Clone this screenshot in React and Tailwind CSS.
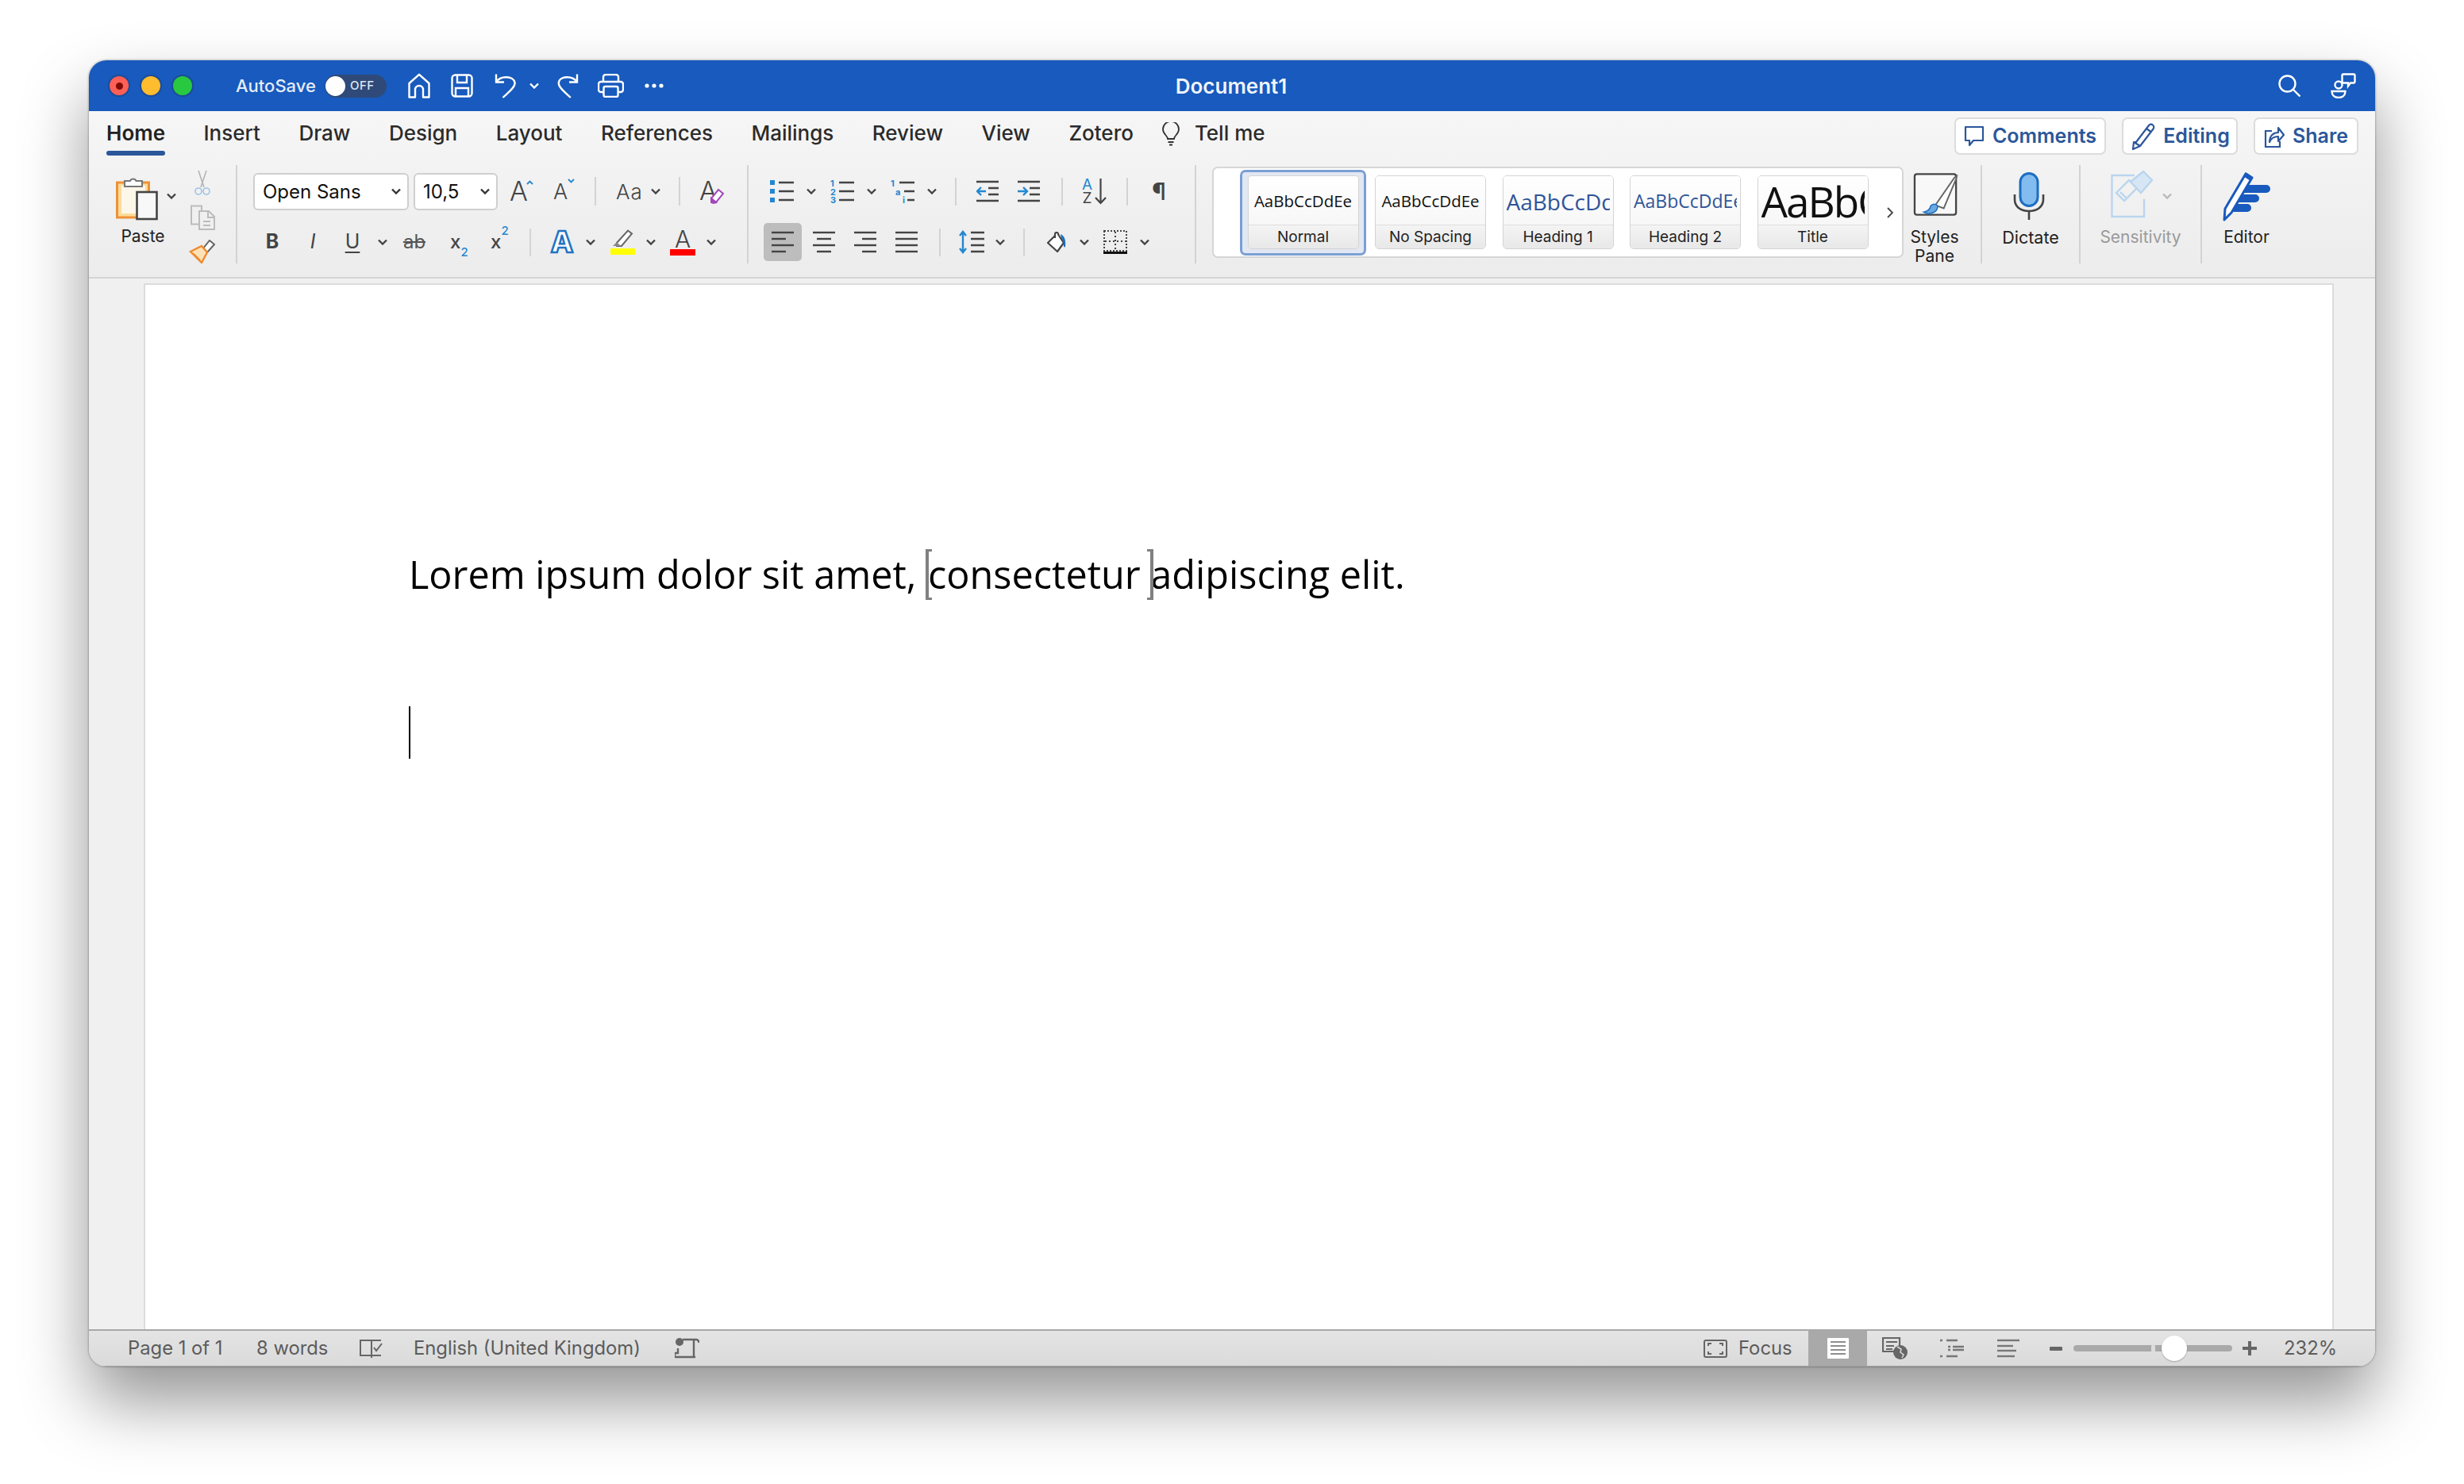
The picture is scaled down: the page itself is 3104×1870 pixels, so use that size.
import React from "react";

const Chev = ({ c = "#444", cls = "" }) => (
  <svg className={`shrink-0 ${cls}`} width="12" height="8" viewBox="0 0 12 8"><path d="M1 1.5l5 5 5-5" fill="none" stroke={c} strokeWidth="2.4" /></svg>
);
const Sep = ({ cls = "" }) => <div className={`w-[2px] shrink-0 bg-[#d3d3d3] ${cls}`} />;
const Lines = ({ w = 28, h = 24, items, c = "#444", sw = 2.4, cls = "" }) => (
  <svg className={`shrink-0 ${cls}`} width={w} height={h} viewBox={`0 0 ${w} ${h}`}>
    {items.map(([x1, x2, y], i) => <path key={i} d={`M${x1} ${y}H${x2}`} stroke={c} strokeWidth={sw} />)}
  </svg>
);
const BLUE = "#2487cf";

const Tab = ({ children, active }) => (
  <div className="flex flex-col">
    <span className={`leading-[32px] text-[26px] whitespace-nowrap ${active ? "font-semibold text-[#222]" : "font-medium text-[#2b2b2b]"}`}>{children}</span>
    <span className={`mt-[6px] h-[6px] rounded-[3px] ${active ? "bg-[#2b579a]" : "bg-transparent"}`} />
  </div>
);

const TopBtn = ({ children, icon, cls = "" }) => (
  <div className={`h-[47px] rounded-[7px] border-2 border-[#dcdcdc] bg-white flex items-center justify-center gap-[10px] text-[25px] font-semibold text-[#2b579a] pt-[1px] ${cls}`}>
    {icon}
    <span>{children}</span>
  </div>
);

const Thumb = ({ sample, label, cls = "" }) => (
  <div className={`w-[140px] h-[93px] rounded-[5px] border border-[#d4d4d4] overflow-hidden flex flex-col shrink-0 ${cls}`}>
    <div className="h-[61px] pt-[2px] bg-gradient-to-b from-white to-[#f7f7f7] flex items-center px-[4px] overflow-hidden justify-center whitespace-nowrap">
      {sample}
    </div>
    <div className="flex-1 border-t border-[#dedede] bg-gradient-to-b from-[#f4f4f4] to-[#e8e8e8] flex items-center justify-center text-[19px] text-[#222] leading-none">{label}</div>
  </div>
);

const OS = "font-['Open_Sans',sans-serif]";

export default function App() {
  return (
    <div className="w-[3104px] h-[1870px] bg-white overflow-hidden pt-[76px] pl-[112px] font-[Inter,sans-serif]">
      <div className="w-[2880px] h-[1646px] rounded-[22px] overflow-hidden flex flex-col bg-[#f1f1f1] shadow-[0_44px_84px_rgba(0,0,0,0.42),0_0_3px_rgba(0,0,0,0.45)]">
        {/* Title bar */}
        <div className="h-[64px] shrink-0 bg-[#185abd] grid grid-cols-[1fr_auto_1fr] items-center text-white">
          <div className="flex items-center">
            <div className="ml-[26px] w-[24px] h-[24px] rounded-full bg-[#ff5f57] ring-2 ring-[#1c4c98] flex items-center justify-center"><div className="w-[9px] h-[9px] rounded-full bg-[#7f0a05]" /></div>
            <div className="ml-[16px] w-[24px] h-[24px] rounded-full bg-[#febc2e] ring-2 ring-[#1c4c98]" />
            <div className="ml-[16px] w-[24px] h-[24px] rounded-full bg-[#28c840] ring-2 ring-[#1c4c98]" />
            <span className="ml-[55px] w-[100px] text-[22px] font-medium text-[#e4ecf8] whitespace-nowrap">AutoSave</span>
            <div className="ml-[12px] w-[78px] h-[29px] rounded-full bg-[#2f4a78] flex items-center pl-[1px]">
              <div className="w-[25px] h-[25px] rounded-full bg-white shrink-0" />
              <span className="ml-[6px] text-[15px] font-medium tracking-[0.5px] text-[#dfe6f2]">OFF</span>
            </div>
            <svg className="ml-[26px] shrink-0" width="30" height="32" viewBox="0 0 30 32" fill="none" stroke="#fff" strokeWidth="2.4"><path d="M2.5 30.5V13L15 1.8 27.5 13v17.5H20V21a5 5 0 0 0-10 0v9.5z" strokeLinejoin="round" /></svg>
            <svg className="ml-[25px] shrink-0" width="28" height="30" viewBox="0 0 28 30" fill="none" stroke="#fff" strokeWidth="2.4"><rect x="1.5" y="1.5" width="25" height="27" rx="4" /><path d="M8 2v9h12V2M6 28V18h16v10" /></svg>
            <svg className="ml-[27px] shrink-0" width="28" height="32" viewBox="0 0 28 32" fill="none" stroke="#fff" strokeWidth="2.4"><path d="M2 1.5v10h10M2 11.5C7 3 24 3 25.5 12c1 6-9 13-15 19" /></svg>
            <Chev c="#fff" cls="ml-[16px]" />
            <svg className="ml-[23px] shrink-0" width="27" height="32" viewBox="0 0 27 32" fill="none" stroke="#fff" strokeWidth="2.4"><path d="M25 1.5v10H15M25 11.5C20 3 3 3 1.8 12c-1 6 9 13 15 19" /></svg>
            <svg className="ml-[24px] shrink-0" width="33" height="30" viewBox="0 0 33 30" fill="none" stroke="#fff" strokeWidth="2.4"><path d="M7 10V4a3 3 0 0 1 3-3h13a3 3 0 0 1 3 3v6" /><path d="M7 23H4a3 3 0 0 1-3-3v-7a3 3 0 0 1 3-3h25a3 3 0 0 1 3 3v7a3 3 0 0 1-3 3h-3" /><rect x="7.5" y="16" width="18" height="13" rx="2" /></svg>
            <svg className="ml-[26px] shrink-0" width="24" height="6" viewBox="0 0 24 6" fill="#fff"><circle cx="3" cy="3" r="2.6" /><circle cx="12" cy="3" r="2.6" /><circle cx="21" cy="3" r="2.6" /></svg>
          </div>
          <div className="text-[26px] font-semibold text-white/95 -ml-[2px]">Document1</div>
          <div className="flex items-center justify-end pr-[24px] gap-[38px]">
            <svg width="28" height="28" viewBox="0 0 28 28" fill="none" stroke="#fff" strokeWidth="2.4"><circle cx="11.5" cy="11.5" r="10" /><path d="M18.5 18.5l9 9" /></svg>
            <svg width="32" height="32" viewBox="0 0 32 32" fill="none" stroke="#fff" strokeWidth="2.4"><circle cx="10" cy="15" r="4.5" /><path d="M1.5 23h17c0 5-3.5 8-8.5 8s-8.5-3-8.5-8z" /><path d="M16 1.5h13a1.5 1.5 0 0 1 1.5 1.5v8A1.5 1.5 0 0 1 29 12.5h-4l-3 4v-4h-6A1.5 1.5 0 0 1 14.5 11V3A1.5 1.5 0 0 1 16 1.5z" /></svg>
          </div>
        </div>

        {/* Ribbon */}
        <div className="h-[211px] shrink-0 border-b-2 border-[#d4d4d4] bg-gradient-to-b from-[#f6f6f6] to-[#ececec] flex flex-col">
          {/* Tab row */}
          <div className="h-[68px] shrink-0 flex items-start pl-[22px] pr-[21px] pt-[8px]">
            <div className="flex items-start gap-[48.5px] mt-[4px]">
              <Tab active>Home</Tab>
              <Tab>Insert</Tab>
              <Tab>Draw</Tab>
              <Tab>Design</Tab>
              <Tab>Layout</Tab>
              <Tab>References</Tab>
              <Tab>Mailings</Tab>
              <Tab>Review</Tab>
              <Tab>View</Tab>
              <Tab>Zotero</Tab>
              <div className="flex items-start -ml-[13.5px]">
                <svg className="mt-[2px] shrink-0" width="24" height="30" viewBox="0 0 24 30" fill="none" stroke="#333" strokeWidth="1.8"><path d="M8 21c0-4-6-6-6-12a10 10 0 0 1 20 0c0 6-6 8-6 12z" /><path d="M8.5 25h7M10 28.5h4" /></svg>
                <span className="ml-[18px]"><Tab>Tell me</Tab></span>
              </div>
            </div>
            <div className="ml-auto flex gap-[20px]">
              <TopBtn cls="w-[191px]" icon={<svg width="26" height="28" viewBox="0 0 26 28" fill="none" stroke="#2b579a" strokeWidth="2.2"><path d="M2 2h22v17H12l-5 6v-6H2z" strokeLinejoin="round" /></svg>}>Comments</TopBtn>
              <TopBtn cls="w-[146px]" icon={<svg width="32" height="36" viewBox="0 0 32 36" fill="none" stroke="#2b579a" strokeWidth="2.2"><path d="M8 25L24 4a3.5 3.5 0 0 1 5.5 4.5L13 30l-9 4 1-9zM5 25l8 5M21 8l6 4.5" strokeLinejoin="round" /></svg>}>Editing</TopBtn>
              <TopBtn cls="w-[132px]" icon={<svg width="26" height="30" viewBox="0 0 26 30" fill="none" stroke="#2b579a" strokeWidth="2.2"><path d="M10 8H2v20h18v-7" /><path d="M7 22c0-8 5-12 11-12V4l7 9-7 8v-6c-5 0-9 2-11 7z" strokeLinejoin="round" /></svg>}>Share</TopBtn>
            </div>
          </div>

          {/* Tool row */}
          <div className="flex items-start h-[141px]">
            {/* Clipboard */}
            <div className="w-[185px] shrink-0 flex items-start pl-[34px]">
              <div className="w-[76px] shrink-0 flex flex-col">
                <div className="flex pt-[10px] h-[78px] items-start">
                  <svg className="shrink-0" width="54" height="60" viewBox="0 0 54 60"><rect x="1.5" y="12" width="40" height="44" fill="#fbdc9b" stroke="#ee9138" strokeWidth="3" /><rect x="7" y="16" width="30" height="35" fill="#fdf7ea" /><path d="M11 17v-7h7a4 4 0 0 1 7.5 0H33v7z" fill="#fff" stroke="#777" strokeWidth="2" /><rect x="26.5" y="24" width="25" height="34" fill="#f8f8f8" stroke="#444" strokeWidth="2.6" /></svg>
                  <Chev cls="ml-[10px] mt-[25px]" />
                </div>
                <span className="w-[68px] text-center text-[21px] leading-[24px] text-[#222]">Paste</span>
              </div>
              <div className="ml-[16px] w-[33px] shrink-0 flex flex-col items-center">
                <svg className="mt-[6px] shrink-0" width="22" height="32" viewBox="0 0 22 32" fill="none" strokeWidth="1.6"><path d="M6 1l7 21M16 1L9 22" stroke="#b4b4b4" /><circle cx="6" cy="27" r="4" stroke="#9cc3e6" /><circle cx="16" cy="27" r="4" stroke="#9cc3e6" /></svg>
                <svg className="mt-[12px] shrink-0" width="32" height="32" viewBox="0 0 32 32" fill="none" stroke="#bcbcbc" strokeWidth="2"><path d="M15 7V1.5H2v23h9" /><path d="M12 8h12l7 7v16H12zM23 8v8h8M17 21h9M17 26h9" /></svg>
                <svg className="mt-[12px] shrink-0" width="33" height="30" viewBox="0 0 33 30" fill="none"><path d="M26 1l6 5-9 10-5-5z" fill="#fff" stroke="#666" strokeWidth="2" /><path d="M2 15l14-7 7 8-7 13z" fill="#fce2b6" stroke="#ee8a2e" strokeWidth="2.4" /><path d="M6 18l8 8" stroke="#ee8a2e" strokeWidth="2" /></svg>
              </div>
            </div>
            <Sep cls="h-[124px]" />

            {/* Font group */}
            <div className="w-[642px] shrink-0 flex flex-col">
              <div className="h-[66px] flex items-center">
                <div className="ml-[20px] w-[196px] h-[47px] shrink-0 rounded-[6px] border-2 border-[#cfcfcf] bg-white flex items-center pl-[10px] pr-[8px] text-[24px] text-[#111]">
                  <span className="pt-[2px]">Open Sans</span><Chev c="#333" cls="ml-auto" />
                </div>
                <div className="ml-[6px] w-[106px] h-[47px] shrink-0 rounded-[6px] border-2 border-[#cfcfcf] bg-white flex items-center pl-[10px] pr-[8px] text-[24px] text-[#111]">
                  <span className="pt-[2px]">10,5</span><Chev c="#333" cls="ml-auto" />
                </div>
                <div className="ml-[15px] w-[30px] shrink-0 relative h-[36px] text-[34px] font-light leading-[36px] text-[#444]">A<svg className="absolute top-[4px] right-0" width="9" height="6" viewBox="0 0 9 6"><path d="M1 5l3.5-3.5L8 5" fill="none" stroke={BLUE} strokeWidth="1.8" /></svg></div>
                <div className="ml-[25px] w-[27px] shrink-0 relative h-[36px] text-[27px] font-light leading-[38px] text-[#444]">A<svg className="absolute top-[2px] right-0" width="9" height="6" viewBox="0 0 9 6"><path d="M1 1l3.5 3.5L8 1" fill="none" stroke={BLUE} strokeWidth="1.8" /></svg></div>
                <Sep cls="ml-[25px] h-[36px]" />
                <span className="ml-[25px] w-[30px] shrink-0 text-[26px] font-light tracking-[1px] text-[#444] whitespace-nowrap">Aa</span>
                <Chev cls="ml-[14px]" />
                <Sep cls="ml-[23px] h-[36px]" />
                <div className="ml-[24px] w-[31px] h-[36px] shrink-0 relative text-[33px] font-light leading-[34px] text-[#444]">A<svg className="absolute left-[12px] top-[14px]" width="20" height="20" viewBox="0 0 20 20" fill="#fff" stroke="#a347ba" strokeWidth="2"><path d="M12 2l6 5-9 11-6-5z" /><path d="M3 13l6 5-3 1-3-1z" fill="#a347ba" /></svg></div>
              </div>
              <div className="h-[62px] flex items-center">
                <span className="ml-[33px] w-[22px] shrink-0 text-center text-[25px] font-bold text-[#444]">B</span>
                <span className="ml-[30px] w-[20px] shrink-0 text-center text-[25px] italic font-normal text-[#444]">I</span>
                <span className="ml-[29px] w-[22px] shrink-0 text-center text-[25px] underline underline-offset-[4px] text-[#444]">U</span>
                <Chev cls="ml-[21px]" />
                <span className="ml-[17px] w-[34px] shrink-0 text-center text-[24px] line-through text-[#555]">ab</span>
                <span className="ml-[28px] w-[26px] shrink-0 text-[24px] font-medium text-[#444] whitespace-nowrap">x<sub className="text-[15px] text-[#2487cf] align-[-6px]">2</sub></span>
                <span className="ml-[25px] w-[26px] shrink-0 text-[24px] font-medium text-[#444] whitespace-nowrap">x<sup className="text-[15px] text-[#2487cf] align-[10px]">2</sup></span>
                <Sep cls="ml-[23px] h-[35px]" />
                <span className="ml-[23px] w-[32px] shrink-0 text-center text-[37px] leading-[38px] font-extrabold text-white [-webkit-text-stroke:2.5px_#1f74c4]">A</span>
                <Chev cls="ml-[14px]" />
                <div className="ml-[19px] w-[31px] shrink-0 flex flex-col">
                  <svg width="31" height="22" viewBox="0 0 31 22" fill="none"><path d="M8 17L22 1.5l5 4L14 21H8z" fill="#fff" stroke="#666" strokeWidth="2" /><path d="M8 16l5 5H3z" fill="#888" /></svg>
                  <div className="h-[8px] mt-[2px] bg-[#ffff00]" />
                </div>
                <Chev cls="ml-[14px]" />
                <div className="ml-[18px] w-[32px] shrink-0 flex flex-col items-center">
                  <span className="text-[30px] font-light leading-[25px] text-[#444]">A</span>
                  <div className="h-[8px] w-full bg-[#ff0000]" />
                </div>
                <Chev cls="ml-[14px]" />
              </div>
            </div>
            <Sep cls="h-[124px]" />

            {/* Paragraph group */}
            <div className="w-[562px] shrink-0 flex flex-col">
              <div className="h-[66px] flex items-center">
                <svg className="ml-[27px] shrink-0" width="30" height="30" viewBox="0 0 30 30"><rect width="6" height="6" y="1" fill={BLUE} /><rect width="6" height="6" y="12" fill={BLUE} /><rect width="6" height="6" y="23" fill={BLUE} /><path d="M11 4h19M11 15h19M11 26h19" stroke="#444" strokeWidth="2.4" /></svg>
                <Chev cls="ml-[16px]" />
                <svg className="ml-[18px] shrink-0" width="30" height="30" viewBox="0 0 30 30" fontFamily="Inter" fontSize="11" fontWeight="700" fill={BLUE}><text x="0" y="9">1</text><text x="0" y="20">2</text><text x="0" y="30">3</text><path d="M11 4h19M11 15h19M11 26h19" stroke="#444" strokeWidth="2.4" /></svg>
                <Chev cls="ml-[16px]" />
                <svg className="ml-[18px] shrink-0" width="30" height="30" viewBox="0 0 30 30" fontFamily="Inter" fontSize="11" fontWeight="700" fill={BLUE}><text x="0" y="9">1</text><text x="6" y="20">a</text><text x="15" y="30">i</text><path d="M11 4h19M17 15h13M21 26h9" stroke="#444" strokeWidth="2.4" /></svg>
                <Chev cls="ml-[16px]" />
                <Sep cls="ml-[23px] h-[35px]" />
                <svg className="ml-[25px] shrink-0" width="28" height="28" viewBox="0 0 28 28"><path d="M0 2h28M15 10h13M15 18h13M0 26h28" stroke="#444" strokeWidth="2.4" /><path d="M12 14H2M6 9l-5 5 5 5" fill="none" stroke={BLUE} strokeWidth="2.4" /></svg>
                <svg className="ml-[24px] shrink-0" width="28" height="28" viewBox="0 0 28 28"><path d="M0 2h28M15 10h13M15 18h13M0 26h28" stroke="#444" strokeWidth="2.4" /><path d="M0 14h10M7 9l5 5-5 5" fill="none" stroke={BLUE} strokeWidth="2.4" /></svg>
                <Sep cls="ml-[27px] h-[35px]" />
                <div className="ml-[23px] w-[32px] h-[34px] shrink-0 flex">
                  <div className="flex flex-col items-center text-[19px] leading-[17px] font-normal w-[15px]"><span className="text-[#2487cf]">A</span><span className="text-[#444]">Z</span></div>
                  <svg className="ml-[2px]" width="15" height="34" viewBox="0 0 15 34" fill="none" stroke="#444" strokeWidth="2.2"><path d="M7.5 1v31M1 25l6.5 7 6.5-7" /></svg>
                </div>
                <Sep cls="ml-[25px] h-[35px]" />
                <span className="ml-[29px] w-[20px] shrink-0 text-center text-[30px] font-medium text-[#444] leading-none">¶</span>
              </div>
              <div className="h-[62px] flex items-center">
                <div className="ml-[19px] w-[48px] h-[48px] shrink-0 rounded-[5px] bg-[#bdbdbd] flex items-center justify-center">
                  <Lines items={[[0, 28, 2], [0, 18, 10], [0, 28, 18], [0, 18, 26]]} h={28} />
                </div>
                <Lines cls="ml-[14px]" items={[[0, 28, 2], [5, 23, 10], [0, 28, 18], [5, 23, 26]]} h={28} />
                <Lines cls="ml-[24px]" items={[[0, 28, 2], [10, 28, 10], [0, 28, 18], [10, 28, 26]]} h={28} />
                <Lines cls="ml-[24px]" items={[[0, 28, 2], [0, 28, 10], [0, 28, 18], [0, 28, 26]]} h={28} />
                <Sep cls="ml-[27px] h-[35px]" />
                <svg className="ml-[23px] shrink-0" width="32" height="30" viewBox="0 0 32 30"><path d="M15 3h17M15 11h17M15 19h17M15 27h17" stroke="#444" strokeWidth="2.4" /><path d="M5 3v24M1 7l4-5 4 5M1 23l4 5 4-5" fill="none" stroke={BLUE} strokeWidth="2.4" /></svg>
                <Chev cls="ml-[14px]" />
                <Sep cls="ml-[23px] h-[35px]" />
                <svg className="ml-[28px] shrink-0" width="25" height="26" viewBox="0 0 25 26" fill="none"><path d="M10 8V3a2 2 0 0 1 4 0l1 2 6 9-8 11L1 14l9-9" stroke="#444" strokeWidth="2.2" fill="#fff" strokeLinejoin="round" /><path d="M17 3c5 2 7 8 6 16-1 1-2 0-2-1 0-5-1-8-3-10z" fill="#1d6fc0" /></svg>
                <Chev cls="ml-[16px]" />
                <svg className="ml-[18px] shrink-0" width="30" height="30" viewBox="0 0 30 30" fill="none"><rect x="1" y="1" width="28" height="25" stroke="#444" strokeWidth="2" strokeDasharray="2 2" /><path d="M15 2v24M2 14h26" stroke="#444" strokeWidth="2" strokeDasharray="2 3" /><path d="M0 28.5h30" stroke="#111" strokeWidth="3" /></svg>
                <Chev cls="ml-[16px]" />
              </div>
            </div>
            <Sep cls="h-[124px]" />

            {/* Styles gallery */}
            <div className="ml-[20px] mt-[2px] w-[871px] h-[115px] shrink-0 rounded-[7px] border-2 border-[#d6d6d6] bg-white flex items-center pl-[33px]">
              <div className="w-[159px] h-[108px] shrink-0 rounded-[7px] border-[3px] border-[#7b9fd3] bg-[#e1e7f3] flex items-center justify-center">
                <Thumb label="Normal" sample={<span className={`${OS} text-[20.5px] font-medium text-[#111]`}>AaBbCcDdEe</span>} />
              </div>
              <Thumb cls="ml-[11px]" label="No Spacing" sample={<span className={`${OS} text-[20.5px] font-medium text-[#111]`}>AaBbCcDdEe</span>} />
              <Thumb cls="ml-[20.5px]" label="Heading 1" sample={<span className={`${OS} text-[28px] text-[#2f5597] flex justify-start w-full overflow-hidden`}>AaBbCcDdE</span>} />
              <Thumb cls="ml-[20.5px]" label="Heading 2" sample={<span className={`${OS} text-[23px] text-[#2f5597] flex justify-start w-full overflow-hidden`}>AaBbCcDdEe</span>} />
              <Thumb cls="ml-[20.5px]" label="Title" sample={<span className={`${OS} text-[53px] leading-[56px] tracking-[-2px] text-[#111] flex justify-start w-full overflow-hidden`}>AaBbCc</span>} />
              <svg className="ml-[23px] shrink-0" width="8" height="14" viewBox="0 0 8 14"><path d="M1 1l6 6-6 6" fill="none" stroke="#444" strokeWidth="1.8" /></svg>
            </div>

            {/* Styles pane */}
            <div className="w-[78px] shrink-0 flex flex-col items-center">
              <div className="h-[79px] pt-[10px] pl-[4px]">
                <svg width="60" height="56" viewBox="0 0 60 58" fill="none"><rect x="2" y="1.5" width="54" height="53" rx="3" fill="#f8f8f8" stroke="#444" strokeWidth="2.4" /><path d="M29 42L54 6l3-2-1 4-16 38z" fill="#fff" stroke="#666" strokeWidth="2" /><path d="M20 53c6 0 12-3 12-10-2-3-7-3-9 0-1 4-3 7-9 8 2 1 4 2 6 2z" fill="#6aa9e0" stroke="#1d6fc0" strokeWidth="1.6" /></svg>
              </div>
              <span className="text-[21px] leading-[24px] text-[#222] text-center">Styles<br />Pane</span>
            </div>
            <Sep cls="ml-[19px] h-[124px]" />

            {/* Dictate */}
            <div className="w-[122px] shrink-0 flex flex-col items-center">
              <div className="h-[79px] pt-[9px] pr-[4px]">
                <svg width="40" height="60" viewBox="0 0 40 60" fill="none"><rect x="9" y="1.5" width="22" height="41" rx="11" fill="#83bcee" stroke="#1b6ec2" strokeWidth="3" /><path d="M2 28v6c0 10 8 15 18 15s18-5 18-15v-6M20 49v11" stroke="#444" strokeWidth="2.6" /></svg>
              </div>
              <span className="text-[21.5px] leading-[24px] text-[#222]">Dictate</span>
            </div>
            <Sep cls="h-[124px]" />

            {/* Sensitivity */}
            <div className="w-[151px] shrink-0 flex flex-col items-center">
              <div className="h-[79px] pt-[7px] flex items-start pl-[2px]">
                <svg className="shrink-0" width="54" height="60" viewBox="0 0 54 60" fill="none" stroke="#b9d5ee" strokeWidth="2.4"><path d="M30 6H1.5v52H42V36" /><path d="M7 28l16-16 10 10-16 16zM12 27l8 8" /><path d="M25 14l16-13 11 11-14 16z" fill="#d6e6f5" /></svg>
                <Chev c="#b8b8b8" cls="ml-[11px] mt-[28px]" />
              </div>
              <span className="text-[21px] leading-[24px] text-[#9a9a9a]">Sensitivity</span>
            </div>
            <Sep cls="h-[124px]" />

            {/* Editor */}
            <div className="w-[112px] shrink-0 flex flex-col items-center">
              <div className="h-[79px] pt-[7px]">
                <svg width="62" height="64" viewBox="0 0 62 64" fill="none"><path d="M24 18h32a5 5 0 0 1 0 10H19zM18 30h24a5 5 0 0 1 0 10H12zM12 42h20a5 5 0 0 1 0 10H6z" fill="#185abd" /><path d="M4 48L30 4l8 5-26 44-9 9z" fill="#fff" stroke="#185abd" strokeWidth="3" strokeLinejoin="round" /><path d="M30 2l9 6-3 5-9-6z" fill="#185abd" /></svg>
              </div>
              <span className="text-[21px] leading-[24px] text-[#222]">Editor</span>
            </div>
          </div>
        </div>

        {/* Doc area */}
        <div className="flex-1 min-h-0 px-[69px] pt-[6px] bg-[#f0f0f0]">
          <div className="h-full w-[2759px] bg-white border-t-2 border-x-2 border-[#dcdcdc] pl-[332px] pt-[330px] text-black">
            <div className={`${OS} text-[48.6px] leading-[68px] whitespace-nowrap`}>
              Lorem ipsum dolor sit amet, <span className="relative inline-block ml-[2px]">consectetur
                <span className="absolute -left-[3px] top-[3px] w-[8px] h-[64px] border-l-[4px] border-y-[3px] border-[#808080]" />
                <span className="absolute -right-[16px] top-[3px] w-[8px] h-[64px] border-r-[4px] border-y-[3px] border-[#808080]" />
              </span> adipiscing elit.
            </div>
            <div className="mt-[133px] w-[2px] h-[66px] bg-black" />
          </div>
        </div>

        {/* Status bar */}
        <div className="h-[47px] shrink-0 border-t-2 border-[#a8a8a8] border-b border-b-[#a0a0a0] bg-gradient-to-b from-[#e4e4e4] to-[#dadada] flex items-stretch text-[23.8px] text-[#5c5c5c]">
          <div className="flex items-center">
            <span className="ml-[49px] w-[120px] whitespace-nowrap">Page 1 of 1</span>
            <span className="ml-[42px] w-[90px] whitespace-nowrap">8 words</span>
            <svg className="ml-[39px] shrink-0" width="32" height="26" viewBox="0 0 32 26" fill="none" stroke="#666" strokeWidth="2"><path d="M16 3H2v19h14zM16 3h12M16 22h12M16 22v3M19 12l3 4 7-9" /></svg>
            <span className="ml-[37px] w-[286px] whitespace-nowrap">English (United Kingdom)</span>
            <svg className="ml-[43px] shrink-0" width="31" height="28" viewBox="0 0 31 28" fill="none"><circle cx="6" cy="6" r="5" fill="#666" /><path d="M10 3h17a3 3 0 0 1 3 4M24 3v22M10 25H0v-5h4v-6M0 25h26" stroke="#666" strokeWidth="2.4" /></svg>
          </div>
          <div className="ml-auto flex items-center pr-[51px]">
            <svg className="shrink-0" width="30" height="23" viewBox="0 0 30 23" fill="none" stroke="#666"><rect x="1" y="1" width="28" height="21" rx="2" strokeWidth="2" /><path d="M6 8V5h4M20 5h4v3M6 15v3h4M20 18h4v-3" strokeWidth="2" /></svg>
            <span className="ml-[14px] w-[66px] whitespace-nowrap">Focus</span>
            <div className="ml-[22px] w-[74px] self-stretch bg-[#a9a9a9] flex items-center justify-center">
              <svg width="27" height="26" viewBox="0 0 27 26"><rect width="27" height="26" rx="1" fill="#fff" /><path d="M4 5h19M4 10h19M4 15h19M4 20h19" stroke="#8e8e8e" strokeWidth="2.2" /></svg>
            </div>
            <svg className="ml-[19px] shrink-0" width="32" height="28" viewBox="0 0 32 28" fill="none"><path d="M22 18H1V1h21v12" stroke="#666" strokeWidth="2.2" /><path d="M5 6h14M5 11h10M5 15h8" stroke="#666" strokeWidth="2.2" /><circle cx="23" cy="19" r="9" fill="#666" /><path d="M19 12l5 3-1 4 4 3-2 4" stroke="#ddd" strokeWidth="1.5" /></svg>
            <svg className="ml-[41px] shrink-0" width="30" height="24" viewBox="0 0 30 24" fill="none" stroke="#777" strokeWidth="2.4"><path d="M0 2h3M8 2h14M10 10h3M16 10h14M10 14h3M16 14h14M0 22h3M8 22h14" /></svg>
            <Lines w={28} h={24} c="#777" cls="ml-[42px]" items={[[0, 28, 2], [0, 20, 9], [0, 24, 15], [0, 22, 22]]} />
            <div className="ml-[38px] w-[16px] h-[5px] bg-[#666] rounded-[1px] shrink-0" />
            <div className="ml-[14px] w-[200px] h-[8px] rounded-full bg-[#a9a9a9] shrink-0 relative">
              <div className="absolute left-[98px] -top-[1px] w-[5px] h-[10px] rounded-full bg-[#dcdcdc]" />
              <div className="absolute left-[111px] -top-[12px] w-[32px] h-[32px] rounded-full bg-white shadow-[0_1px_2px_rgba(0,0,0,0.25)]" />
            </div>
            <svg className="ml-[13px] shrink-0" width="18" height="18" viewBox="0 0 18 18"><path d="M9 0v18M0 9h18" stroke="#666" strokeWidth="4" /></svg>
            <span className="ml-[34px] w-[64px] whitespace-nowrap">232%</span>
          </div>
        </div>
      </div>
    </div>
  );
}
